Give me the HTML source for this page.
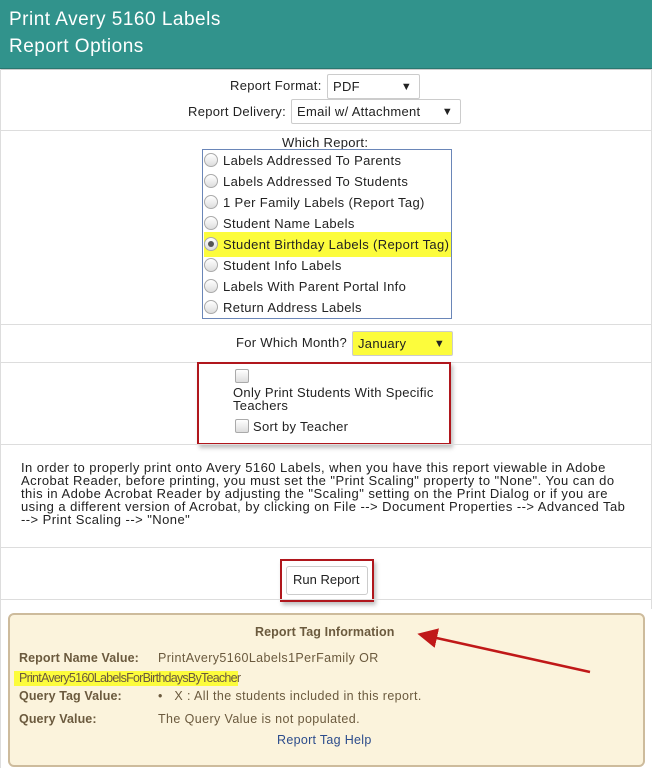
<!DOCTYPE html><html><head><style>
body{margin:0;width:652px;height:768px;overflow:hidden;background:#fff;font-family:"Liberation Sans",sans-serif;font-size:13px;color:#222;position:relative;letter-spacing:0.3px}
.a{position:absolute;white-space:nowrap}
.hr{position:absolute;left:0;width:652px;height:1px;background:#ddd}
.sel{position:absolute;border:1px solid #ccc;border-radius:2px;background:#fff;font-size:13px;box-sizing:border-box;padding:0 5px;display:flex;align-items:center}
.sel:after{content:"▼";position:absolute;right:7px;top:6px;font-size:11px}
.rad{position:absolute;left:204px;width:12px;height:12px;border-radius:50%;border:1px solid #aaa;background:linear-gradient(#fff,#ddd)}
.lbl{position:absolute;left:223px;font-size:13px;letter-spacing:0.35px;white-space:nowrap}
.lab{font-weight:bold;color:#6b5a3e;font-size:12.5px;letter-spacing:0.1px}
.val{color:#6b5a3e;font-size:12.5px;letter-spacing:0.4px}
</style></head><body>
<div class="a" style="left:0;top:0;width:652px;height:68px;background:#31938c;border-bottom:1px solid #2a7770"></div>
<div class="a" style="left:9px;top:9px;color:#fff;font-size:19px;letter-spacing:0.5px">Print Avery 5160 Labels</div>
<div class="a" style="left:9px;top:36px;color:#fff;font-size:19px;letter-spacing:0.5px">Report Options</div>
<div class="hr" style="top:69px;background:#ccc"></div>
<div class="a" style="left:0;top:69px;width:1px;height:699px;background:#ddd"></div>
<div class="a" style="left:651px;top:69px;width:1px;height:540px;background:#ddd"></div>

<div class="a" style="left:230px;top:78px">Report Format:</div>
<div class="sel" style="left:327px;top:74px;width:93px;height:25px">PDF</div>
<div class="a" style="left:188px;top:104px">Report Delivery:</div>
<div class="sel" style="left:291px;top:99px;width:170px;height:25px">Email w/ Attachment</div>
<div class="hr" style="top:130px"></div>

<div class="a" style="left:282px;top:135px">Which Report:</div>
<div class="a" style="left:202px;top:149px;width:248px;height:168px;border:1px solid #6a86b8"></div>
<div class="a" style="left:204px;top:232px;width:247px;height:25px;background:#fcfc3c"></div>
<div class="rad" style="top:153px"></div><div class="lbl" style="top:153px">Labels Addressed To Parents</div>
<div class="rad" style="top:174px"></div><div class="lbl" style="top:174px">Labels Addressed To Students</div>
<div class="rad" style="top:195px"></div><div class="lbl" style="top:195px">1 Per Family Labels (Report Tag)</div>
<div class="rad" style="top:216px"></div><div class="lbl" style="top:216px">Student Name Labels</div>
<div class="rad" style="top:237px"></div><div class="a" style="left:208px;top:241px;width:6px;height:6px;border-radius:50%;background:#555"></div><div class="lbl" style="top:237px">Student Birthday Labels (Report Tag)</div>
<div class="rad" style="top:258px"></div><div class="lbl" style="top:258px">Student Info Labels</div>
<div class="rad" style="top:279px"></div><div class="lbl" style="top:279px">Labels With Parent Portal Info</div>
<div class="rad" style="top:300px"></div><div class="lbl" style="top:300px">Return Address Labels</div>
<div class="hr" style="top:324px"></div>

<div class="a" style="left:236px;top:335px">For Which Month?</div>
<div class="sel" style="left:352px;top:331px;width:101px;height:25px;background:#fcfc3c">January</div>
<div class="hr" style="top:362px"></div>

<div class="a" style="left:197px;top:362px;width:250px;height:79px;border:2px solid #b0161c;box-shadow:2px 3px 4px rgba(0,0,0,.25)"></div>
<div class="a" style="left:235px;top:369px;width:12px;height:12px;border:1px solid #aaa;border-radius:2px;background:linear-gradient(#fff,#ddd)"></div>
<div class="a" style="left:233px;top:386px;line-height:13px">Only Print Students With Specific<br>Teachers</div>
<div class="a" style="left:235px;top:419px;width:12px;height:12px;border:1px solid #aaa;border-radius:2px;background:linear-gradient(#fff,#ddd)"></div>
<div class="a" style="left:253px;top:419px">Sort by Teacher</div>
<div class="hr" style="top:444px"></div>

<div class="a" style="left:21px;top:461px;line-height:13px;font-size:13px;letter-spacing:0.45px">In order to properly print onto Avery 5160 Labels, when you have this report viewable in Adobe<br>Acrobat Reader, before printing, you must set the "Print Scaling" property to "None". You can do<br>this in Adobe Acrobat Reader by adjusting the "Scaling" setting on the Print Dialog or if you are<br>using a different version of Acrobat, by clicking on File --&gt; Document Properties --&gt; Advanced Tab<br>--&gt; Print Scaling --&gt; "None"</div>
<div class="hr" style="top:547px"></div>

<div class="a" style="left:280px;top:559px;width:90px;height:39px;border:2px solid #b0161c;box-shadow:2px 3px 4px rgba(0,0,0,.25)"></div>
<div class="a" style="left:286px;top:566px;width:80px;height:27px;border:1px solid #ccc;border-radius:3px;background:#fff"></div>
<div class="a" style="left:293px;top:572px;letter-spacing:0">Run Report</div>
<div class="hr" style="top:599px"></div>

<div class="a" style="left:8px;top:613px;width:633px;height:150px;border:2px solid #cdbb9c;border-radius:6px;background:#fbf3dc"></div>
<div class="a lab" style="left:255px;top:625px">Report Tag Information</div>
<div class="a lab" style="left:19px;top:651px">Report Name Value:</div>
<div class="a val" style="left:158px;top:651px">PrintAvery5160Labels1PerFamily OR</div>
<div class="a" style="left:14px;top:671px;width:224px;height:15px;background:#fcfc3c"></div>
<div class="a val" style="left:19px;top:671px;letter-spacing:-0.75px">PrintAvery5160LabelsForBirthdaysByTeacher</div>
<div class="a lab" style="left:19px;top:689px">Query Tag Value:</div>
<div class="a val" style="left:158px;top:689px">•&nbsp;&nbsp; X : All the students included in this report.</div>
<div class="a lab" style="left:19px;top:712px">Query Value:</div>
<div class="a val" style="left:158px;top:712px">The Query Value is not populated.</div>
<div class="a" style="left:277px;top:733px;color:#2c4c8c;font-size:12.5px;letter-spacing:0.3px">Report Tag Help</div>
<svg class="a" style="left:0;top:0" width="652" height="768"><defs><marker id="m" markerWidth="8" markerHeight="8" refX="2" refY="4" orient="auto"><path d="M0,0 L8,4 L0,8z" fill="#c01818"/></marker></defs><line x1="590" y1="672" x2="432" y2="637" stroke="#c01818" stroke-width="2.5" marker-end="url(#m)"/></svg>
</body></html>
